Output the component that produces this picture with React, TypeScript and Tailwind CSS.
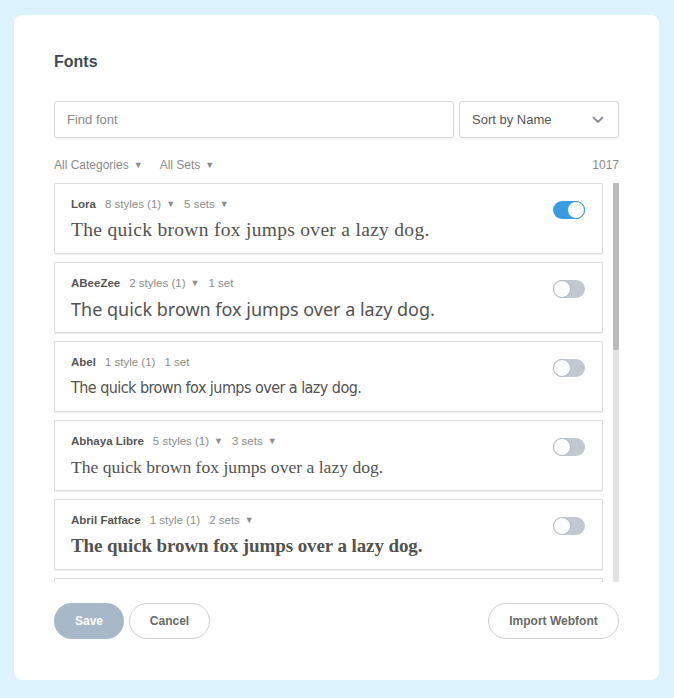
import React from "react";

type Font = {
  name: string;
  styles: string;
  stylesArrow: boolean;
  sets: string;
  setsArrow: boolean;
  on: boolean;
  sampleClass: string;
};

const fonts: Font[] = [
  {
    name: "Lora",
    styles: "8 styles (1)",
    stylesArrow: true,
    sets: "5 sets",
    setsArrow: true,
    on: true,
    sampleClass: "font-['Liberation_Serif',serif] text-[19.5px] tracking-[0.3px]",
  },
  {
    name: "ABeeZee",
    styles: "2 styles (1)",
    stylesArrow: true,
    sets: "1 set",
    setsArrow: false,
    on: false,
    sampleClass: "font-['Noto_Sans',sans-serif] text-[18px]",
  },
  {
    name: "Abel",
    styles: "1 style (1)",
    stylesArrow: false,
    sets: "1 set",
    setsArrow: false,
    on: false,
    sampleClass: "font-['DejaVu_Sans_Condensed','Liberation_Sans_Narrow',sans-serif] font-light text-[16px] tracking-[-0.55px]",
  },
  {
    name: "Abhaya Libre",
    styles: "5 styles (1)",
    stylesArrow: true,
    sets: "3 sets",
    setsArrow: true,
    on: false,
    sampleClass: "font-['Liberation_Serif',serif] text-[17.6px]",
  },
  {
    name: "Abril Fatface",
    styles: "1 style (1)",
    stylesArrow: false,
    sets: "2 sets",
    setsArrow: true,
    on: false,
    sampleClass: "font-['Liberation_Serif',serif] font-bold text-[19px] tracking-[-0.1px]",
  },
  {
    name: "Aclonica",
    styles: "1 style (1)",
    stylesArrow: false,
    sets: "1 set",
    setsArrow: false,
    on: false,
    sampleClass: "font-['Liberation_Sans',sans-serif] text-[18px]",
  },
];

function Toggle({ on }: { on: boolean }) {
  return on ? (
    <div className="w-[32px] h-[18px] rounded-full bg-[#3a9be0] flex items-center justify-end">
      <div className="w-[18px] h-[18px] rounded-full bg-white border-[1.5px] border-[#3a9be0]" />
    </div>
  ) : (
    <div className="w-[32px] h-[18px] rounded-full bg-[#c2c8d1] flex items-center justify-start">
      <div className="w-[18px] h-[18px] rounded-full bg-white border-[1.5px] border-[#b3b9c2]" />
    </div>
  );
}

function Arrow() {
  return <span className="text-[9px] ml-[5px] relative top-[-1px]">▼</span>;
}

function FontCard({ f }: { f: Font }) {
  return (
    <div className="shrink-0 bg-white border border-[#dddddd] shadow-[0_1px_1px_rgba(0,0,0,0.08)] rounded-[1px] pl-4 pr-[17px] pt-[13px] pb-[10px] flex items-start">
      <div className="flex-1 min-w-0">
        <div className="h-[14px] flex items-center text-[11.5px] leading-[14px] font-['Liberation_Sans',sans-serif]">
          <span className="font-bold text-[#555555]">{f.name}</span>
          <span className="ml-[9px] text-[#8c8c8c]">
            {f.styles}
            {f.stylesArrow && <Arrow />}
          </span>
          <span className="ml-[9px] text-[#8c8c8c]">
            {f.sets}
            {f.setsArrow && <Arrow />}
          </span>
        </div>
        <div className={"mt-[6px] h-[26px] leading-[26px] text-[#525252] whitespace-nowrap " + f.sampleClass}>
          The quick brown fox jumps over a lazy dog.
        </div>
      </div>
      <div className="pt-[4px]">
        <Toggle on={f.on} />
      </div>
    </div>
  );
}

export default function App() {
  return (
    <div className="w-[674px] h-[698px] bg-[#dcf3fe] pt-[15px] pl-[14px] font-['Liberation_Sans',sans-serif]">
      <div className="w-[645px] h-[665px] bg-white rounded-[8px] px-10 pt-[37px] flex flex-col">
        <h1 className="text-[16px] leading-[20px] font-bold text-[#3f4a56]">Fonts</h1>

        <div className="mt-[29px] flex gap-[5px]">
          <div className="w-[400px] h-[37px] border border-[#d6d6d6] rounded-[3px] shadow-[0_1px_2px_rgba(0,0,0,0.06)] flex items-center pl-[12px] text-[13px] text-[#8a8a8a]">
            Find font
          </div>
          <div className="w-[160px] h-[37px] border border-[#d6d6d6] rounded-[3px] shadow-[0_1px_2px_rgba(0,0,0,0.06)] flex items-center justify-between pl-[12px] pr-[14px] text-[13px] text-[#555555]">
            <span>Sort by Name</span>
            <svg width="12" height="8" viewBox="0 0 12 8" fill="none">
              <path d="M1.5 1.5L6 6L10.5 1.5" stroke="#8a8f96" strokeWidth="1.8" strokeLinecap="round" strokeLinejoin="round" />
            </svg>
          </div>
        </div>

        <div className="mt-[19px] h-[16px] flex items-center text-[12px] text-[#8a8a8a]">
          <span>
            All Categories<Arrow />
          </span>
          <span className="ml-[17px]">
            All Sets<Arrow />
          </span>
          <span className="ml-auto">1017</span>
        </div>

        <div className="mt-[10px] flex gap-[10px] h-[399px]">
          <div className="flex-1 flex flex-col gap-[8px] overflow-hidden">
            {fonts.map((f) => (
              <FontCard key={f.name} f={f} />
            ))}
          </div>
          <div className="w-[6px] h-full bg-[#e3e3e3] flex flex-col">
            <div className="h-[167px] bg-[#bdbdbd]" />
          </div>
        </div>

        <div className="mt-[21px] flex items-center text-[12px] font-bold">
          <button className="w-[70px] h-[36px] rounded-full bg-[#a7b8c9] text-white">Save</button>
          <button className="ml-[5px] w-[81px] h-[36px] rounded-full border border-[#cfcfcf] text-[#6a6a6a] bg-white">
            Cancel
          </button>
          <button className="ml-auto w-[131px] h-[36px] rounded-full border border-[#cfcfcf] text-[#6a6a6a] bg-white">
            Import Webfont
          </button>
        </div>
      </div>
    </div>
  );
}
